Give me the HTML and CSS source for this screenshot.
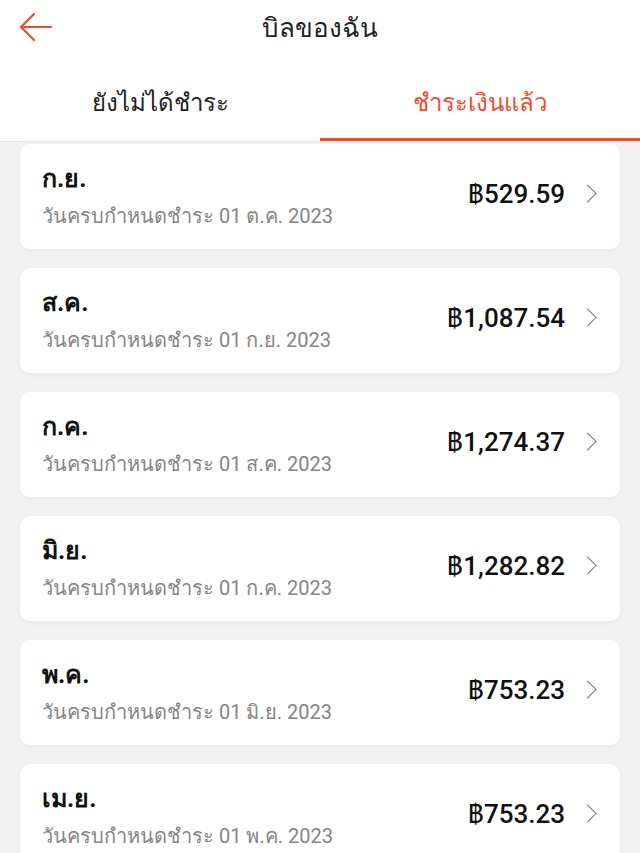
FILE: index.html
```html
<!DOCTYPE html>
<html lang="th">
<head>
  <meta charset="UTF-8">
  <meta name="viewport" content="width=device-width, initial-scale=1.0">
  <title>บิลของฉัน</title>
  <link rel="stylesheet" href="styles.css">
</head>
<body>
  <header class="top">
    <div class="title-bar">
      <a class="back" href="#" aria-label="กลับ">
        <svg width="34" height="30" viewBox="0 0 34 30" fill="none" stroke="#ee4d2d" stroke-width="2.2" stroke-linecap="round" stroke-linejoin="round">
          <path d="M32 15H3"/>
          <path d="M15 2L2 15l13 13"/>
        </svg>
      </a>
      <h1>บิลของฉัน</h1>
    </div>
    <nav class="tabs">
      <a class="tab" href="#">ยังไม่ได้ชำระ</a>
      <a class="tab active" href="#">ชำระเงินแล้ว</a>
    </nav>
  </header>

  <main class="bills">
    <div class="bill">
      <div class="bill-info">
        <div class="month">ก.ย.</div>
        <div class="due">วันครบกำหนดชำระ 01 ต.ค. 2023</div>
      </div>
      <div class="amount">฿529.59</div>
      <span class="chevron"></span>
    </div>
    <div class="bill">
      <div class="bill-info">
        <div class="month">ส.ค.</div>
        <div class="due">วันครบกำหนดชำระ 01 ก.ย. 2023</div>
      </div>
      <div class="amount">฿1,087.54</div>
      <span class="chevron"></span>
    </div>
    <div class="bill">
      <div class="bill-info">
        <div class="month">ก.ค.</div>
        <div class="due">วันครบกำหนดชำระ 01 ส.ค. 2023</div>
      </div>
      <div class="amount">฿1,274.37</div>
      <span class="chevron"></span>
    </div>
    <div class="bill">
      <div class="bill-info">
        <div class="month">มิ.ย.</div>
        <div class="due">วันครบกำหนดชำระ 01 ก.ค. 2023</div>
      </div>
      <div class="amount">฿1,282.82</div>
      <span class="chevron"></span>
    </div>
    <div class="bill">
      <div class="bill-info">
        <div class="month">พ.ค.</div>
        <div class="due">วันครบกำหนดชำระ 01 มิ.ย. 2023</div>
      </div>
      <div class="amount">฿753.23</div>
      <span class="chevron"></span>
    </div>
    <div class="bill">
      <div class="bill-info">
        <div class="month">เม.ย.</div>
        <div class="due">วันครบกำหนดชำระ 01 พ.ค. 2023</div>
      </div>
      <div class="amount">฿753.23</div>
      <span class="chevron"></span>
    </div>
  </main>
</body>
</html>
```

FILE: styles.css
```css
html, body {
  margin: 0;
  padding: 0;
  height: 100%;
  overflow: hidden;
}

body {
  font-family: Roboto, "Noto Sans", sans-serif;
  background: #f2f2f2;
  color: #222;
}

.top {
  background: #fff;
  border-bottom: 1px solid #e4e4e4;
}

.title-bar {
  position: relative;
  height: 54px;
  display: flex;
  align-items: center;
  justify-content: center;
}

.back {
  position: absolute;
  left: 19px;
  top: 12px;
  display: flex;
}

h1 {
  margin: 0;
  font-size: 26px;
  font-weight: normal;
  color: #222;
}

.tabs {
  display: flex;
  height: 87px;
}

.tab {
  flex: 1;
  display: flex;
  align-items: center;
  justify-content: center;
  padding-top: 12px;
  font-size: 24px;
  color: #222;
  text-decoration: none;
  border-bottom: 3px solid transparent;
}

.tab.active {
  color: #ee4d2d;
  border-bottom-color: #ee4d2d;
}

.bills {
  padding: 2px 20px 0;
  display: flex;
  flex-direction: column;
  gap: 19px;
}

.bill {
  height: 105px;
  box-sizing: border-box;
  padding: 0 22px;
  background: #fff;
  border-radius: 10px;
  box-shadow: 0 2px 6px rgba(0, 0, 0, 0.04);
  display: flex;
  align-items: center;
}

.bill-info {
  flex: 1;
}

.month {
  font-size: 25px;
  font-weight: bold;
  color: #111;
  line-height: 34px;
}

.due {
  margin-top: 4px;
  font-size: 20px;
  color: #858585;
}

.amount {
  font-size: 26px;
  font-weight: 500;
  color: #111;
  margin-top: -6px;
}

.chevron {
  width: 12px;
  height: 12px;
  margin: -6px 4px 0 16px;
  border-top: 1.6px solid #777;
  border-right: 1.6px solid #777;
  transform: rotate(45deg);
}
```
